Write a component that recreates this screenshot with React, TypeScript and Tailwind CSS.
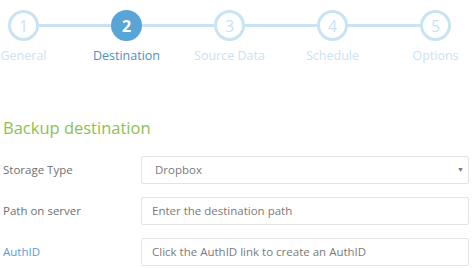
import React from 'react';

const steps = ['General', 'Destination', 'Source Data', 'Schedule', 'Options'];
const active = 1;

function Stepper() {
  return (
    <div className="flex ml-[-28px] pt-[10px]">
      {steps.map((label, i) => (
        <div key={label} className="w-[103px] shrink-0 flex flex-col items-center">
          <div className="flex items-center w-full">
            <div className={`flex-1 h-[3px] ${i === 0 ? 'bg-transparent' : 'bg-[#c9e3f3]'}`} />
            {i === active ? (
              <div className="w-[31px] h-[31px] rounded-full bg-[#5aa5d8] flex items-center justify-center text-white text-[16px] font-bold">
                {i + 1}
              </div>
            ) : (
              <div className="w-[31px] h-[31px] rounded-full border-[3px] border-[#c9e3f3] flex items-center justify-center text-[#c9e3f3] text-[16px]">
                {i + 1}
              </div>
            )}
            <div className={`flex-1 h-[3px] ${i === steps.length - 1 ? 'bg-transparent' : 'bg-[#c9e3f3]'}`} />
          </div>
          <div className={`mt-[6px] text-[12.5px] leading-[18px] whitespace-nowrap ${i === active ? 'text-[#4f8fc0]' : 'text-[#c9e3f3]'}`}>
            {label}
          </div>
        </div>
      ))}
    </div>
  );
}

function Row({ label, link, children }: { label: string; link?: boolean; children: React.ReactNode }) {
  return (
    <div className="flex items-center h-[28px]">
      <div className={`w-[141px] pl-[3px] text-[11.5px] ${link ? 'text-[#5b9bd5]' : 'text-[#707070]'}`}>{label}</div>
      <div className="w-[328px]">{children}</div>
    </div>
  );
}

export default function App() {
  return (
    <div className="w-[474px] h-[268px] bg-white overflow-hidden" style={{ fontFamily: '"Open Sans", "Noto Sans", sans-serif' }}>
      <Stepper />
      <h2 className="mt-[51px] pl-[3px] text-[16.5px] leading-[24px] text-[#8cc152]">Backup destination</h2>
      <div className="mt-[16px] flex flex-col gap-[13px]">
        <Row label="Storage Type">
          <div className="h-[28px] border border-[#e3e3e3] rounded-[2px] flex items-center justify-between pl-[13px] pr-[4px] text-[11.5px] text-[#7a7a7a]">
            <span>Dropbox</span>
            <span className="text-[7px] text-[#777]">▼</span>
          </div>
        </Row>
        <Row label="Path on server">
          <div className="h-[28px] border border-[#e3e3e3] rounded-[2px] flex items-center pl-[10px] text-[11.5px] text-[#7a7a7a]">
            Enter the destination path
          </div>
        </Row>
        <Row label="AuthID" link>
          <div className="h-[28px] border border-[#e3e3e3] rounded-[2px] flex items-center pl-[10px] text-[11.5px] text-[#7a7a7a]">
            Click the AuthID link to create an AuthID
          </div>
        </Row>
      </div>
    </div>
  );
}
